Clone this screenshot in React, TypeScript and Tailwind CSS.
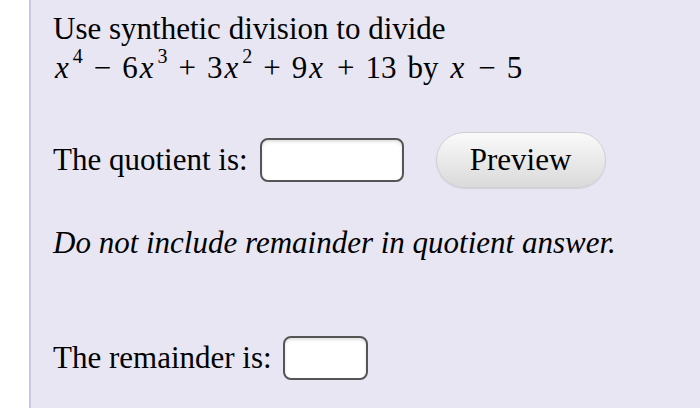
import React from "react";

const serif = { fontFamily: '"Liberation Serif", "Times New Roman", serif' };

function X() {
  return <span className="italic pl-[2px] pr-[3px]">x</span>;
}

function Sup({ children }: { children: React.ReactNode }) {
  return <sup className="text-[20px] top-[-0.75em] ml-[1px]">{children}</sup>;
}

function Op({ children }: { children: React.ReactNode }) {
  return <span className="mx-[11px]">{children}</span>;
}

export default function App() {
  return (
    <div className="w-[700px] h-[408px] bg-white flex overflow-hidden" style={serif}>
      <div className="w-[29px] shrink-0 bg-white" />
      <div className="w-[2px] shrink-0 bg-[#c9c5e2]" />
      <div className="flex-1 bg-[#e9e6f3] text-black pl-[22px] pt-[11px] text-[31px] leading-[36px]">
        <div>Use synthetic division to divide</div>
        <div className="mt-[3px] text-[31px] whitespace-nowrap">
          <X />
          <Sup>4</Sup>
          <Op>−</Op>6<X />
          <Sup>3</Sup>
          <Op>+</Op>3<X />
          <Sup>2</Sup>
          <Op>+</Op>9<X />
          <Op>+</Op>13<span className="ml-[11px] mr-[10px]">by</span>
          <X />
          <Op>−</Op>5
        </div>
        <div className="flex items-center mt-[46px] h-[56px]">
          <span>The quotient is:</span>
          <div className="ml-[12px] w-[144px] h-[44px] bg-white border-2 border-[#555] rounded-[8px] shadow-[inset_0_2px_3px_rgba(0,0,0,0.12)]" />
          <button
            className="ml-[32px] w-[170px] h-[56px] rounded-full border border-[#cfcfd6] bg-gradient-to-b from-[#fafafa] to-[#dadada] text-[31px] shadow-[0_1px_1px_rgba(0,0,0,0.1)]"
            style={serif}
          >
            Preview
          </button>
        </div>
        <div className="italic mt-[37px]">Do not include remainder in quotient answer.</div>
        <div className="flex items-center mt-[75px] h-[44px]">
          <span>The remainder is:</span>
          <div className="ml-[11px] w-[85px] h-[44px] bg-white border-2 border-[#555] rounded-[8px] shadow-[inset_0_2px_3px_rgba(0,0,0,0.12)]" />
        </div>
      </div>
    </div>
  );
}
